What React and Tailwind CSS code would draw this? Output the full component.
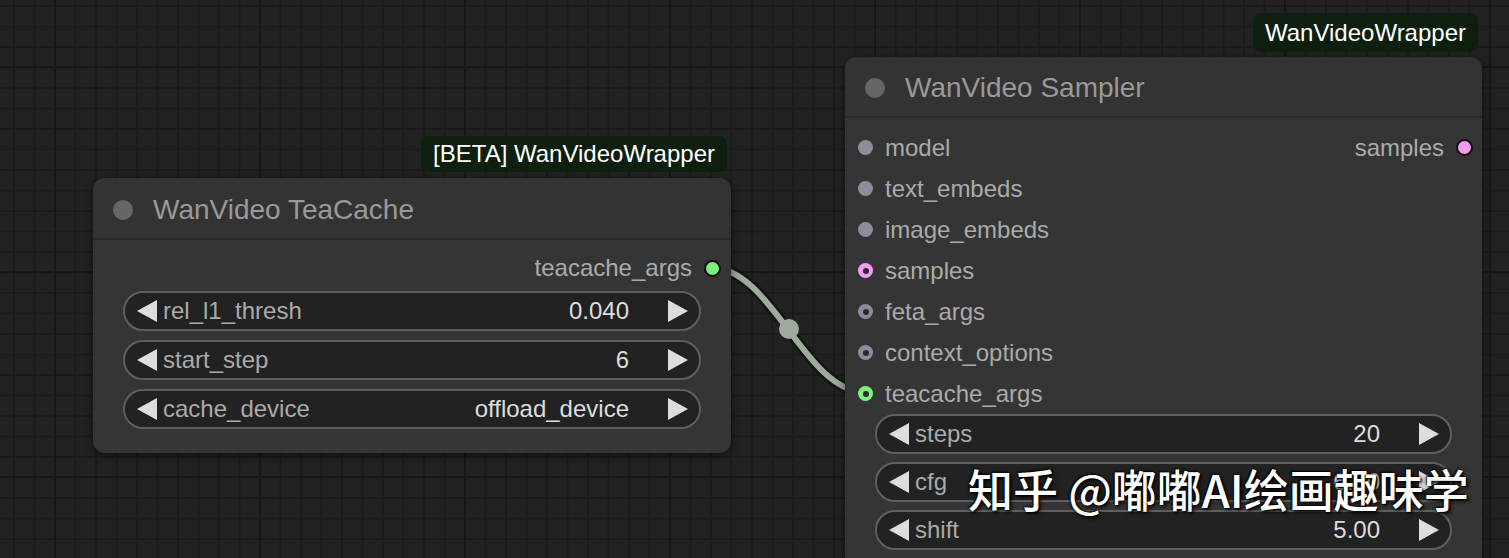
import React from 'react';

const font = "font-['Liberation_Sans',Arial,sans-serif]";

// left / right arrow triangles used by number & combo widgets
const ArrowLeft = () => (
  <svg width="20" height="22" viewBox="0 0 20 22" className="shrink-0">
    <polygon points="20,0 20,22 0,11" fill="#dddddd" />
  </svg>
);

const ArrowRight = () => (
  <svg width="20" height="22" viewBox="0 0 20 22" className="shrink-0">
    <polygon points="0,0 0,22 20,11" fill="#dddddd" />
  </svg>
);

const Widget = ({ label, value }) => (
  <div className="flex h-[40px] items-center rounded-full border-2 border-[#5f5f5f] bg-[#222222] pl-[12px] pr-[11px]">
    <ArrowLeft />
    <span className="ml-[6px] text-[24px] leading-none text-[#aaaaaa]">{label}</span>
    <span className="ml-auto text-[24px] leading-none text-[#dddddd]">{value}</span>
    <span className="ml-[39px]">
      <ArrowRight />
    </span>
  </div>
);

// slot dots: plain (unlinked) or ring with dark centre (linked)
const Dot = ({ color, ring, border }) => (
  <span
    className={
      'flex shrink-0 items-center justify-center rounded-full ' +
      (border ? 'h-[17px] w-[17px] border-2 border-[#111111] ' : 'h-[15px] w-[15px] ') +
      color
    }
  >
    {ring && <span className="h-[6px] w-[6px] rounded-full bg-[#2a2a2a]" />}
  </span>
);

const InputRow = ({ label, color, ring, children }) => (
  <div className="flex h-[41px] items-center pl-[13px] pr-[9px]">
    <Dot color={color} ring={ring} />
    <span className="ml-[12px] text-[24px] leading-none text-[#aaaaaa]">{label}</span>
    {children}
  </div>
);

const Badge = ({ children, className }) => (
  <div
    className={
      'absolute bottom-full right-[4px] flex items-center rounded-[8px] bg-[#0f1f0f] px-[12px] text-[24px] leading-none text-white ' +
      className
    }
  >
    {children}
  </div>
);

const NodeTitle = ({ title, h }) => (
  <div className={'flex items-center border-b-2 border-[#2a2a2a] bg-[#333333] pl-[20px] pt-[3px] rounded-t-[12px] ' + h}>
    <span className="h-[20px] w-[20px] rounded-full bg-[#666666]" />
    <span className="ml-[20px] text-[28px] leading-none text-[#999999]">{title}</span>
  </div>
);

export default function App() {
  return (
    <div
      className={
        'relative h-[558px] w-[1509px] overflow-hidden bg-[#222222] ' +
        'bg-[linear-gradient(to_right,#171717_2px,transparent_2px),linear-gradient(to_bottom,#171717_2px,transparent_2px),linear-gradient(to_right,#1b1b1b_2px,transparent_2px),linear-gradient(to_bottom,#1b1b1b_2px,transparent_2px)] ' +
        '[background-size:205px_205px,205px_205px,20.5px_20.5px,20.5px_20.5px] ' +
        '[background-position:54px_66px,54px_66px,13px_5px,13px_5px] ' +
        font
      }
    >
      {/* link between teacache_args output and sampler input */}
      <svg className="absolute left-0 top-0" width="1509" height="558">
        <path d="M712 268 C 772 268, 805 392, 865 392" fill="none" stroke="#111611" strokeWidth="11" />
        <path d="M712 268 C 772 268, 805 392, 865 392" fill="none" stroke="#9eaa9c" strokeWidth="6" />
        <circle cx="789" cy="329" r="10" fill="#9eaa9c" />
      </svg>

      {/* WanVideo TeaCache node */}
      <div className="absolute left-[93px] top-[178px] w-[638px] rounded-[12px] bg-[#353535] shadow-[0_2px_10px_rgba(0,0,0,0.55)]">
        <Badge className="mb-[6px] h-[36px]">[BETA] WanVideoWrapper</Badge>
        <NodeTitle title="WanVideo TeaCache" h="h-[62px]" />
        <div className="px-[30px] pb-[24px] pt-[8px]">
          <div className="-mr-[20px] flex h-[40px] items-center justify-end">
            <span className="text-[24px] leading-none text-[#aaaaaa]">teacache_args</span>
            <span className="ml-[12px]">
              <Dot color="bg-[#7cf27c]" border />
            </span>
          </div>
          <div className="mt-[3px] flex flex-col gap-[9px]">
            <Widget label="rel_l1_thresh" value="0.040" />
            <Widget label="start_step" value="6" />
            <Widget label="cache_device" value="offload_device" />
          </div>
        </div>
      </div>

      {/* WanVideo Sampler node */}
      <div className="absolute left-[845px] top-[57px] w-[637px] rounded-[12px] bg-[#353535] pb-[20px] shadow-[0_2px_10px_rgba(0,0,0,0.55)]">
        <Badge className="mb-[5px] h-[39px]">WanVideoWrapper</Badge>
        <NodeTitle title="WanVideo Sampler" h="h-[61px]" />
        <div className="pt-[9px]">
          <InputRow label="model" color="bg-[#8c8c9c]">
            <span className="ml-auto text-[24px] leading-none text-[#aaaaaa]">samples</span>
            <span className="ml-[12px]">
              <Dot color="bg-[#f39cf0]" border />
            </span>
          </InputRow>
          <InputRow label="text_embeds" color="bg-[#8c8c9c]" />
          <InputRow label="image_embeds" color="bg-[#8c8c9c]" />
          <InputRow label="samples" color="bg-[#f39cf0]" ring />
          <InputRow label="feta_args" color="bg-[#8c8c9c]" ring />
          <InputRow label="context_options" color="bg-[#8c8c9c]" ring />
          <InputRow label="teacache_args" color="bg-[#7cf27c]" ring />
        </div>
        <div className="flex flex-col gap-[8px] px-[30px]">
          <Widget label="steps" value="20" />
          <Widget label="cfg" value="6.00" />
          <Widget label="shift" value="5.00" />
        </div>
      </div>

      {/* watermark */}
      <div className="absolute left-[968px] top-[466px] whitespace-nowrap text-[45px] font-medium leading-none text-white [text-shadow:1px_1px_2px_#000,-1px_-1px_2px_#000,2px_2px_4px_rgba(0,0,0,0.8)] font-['Noto_Sans_CJK_SC',sans-serif]">
        知乎 @嘟嘟AI绘画趣味学
      </div>
    </div>
  );
}
